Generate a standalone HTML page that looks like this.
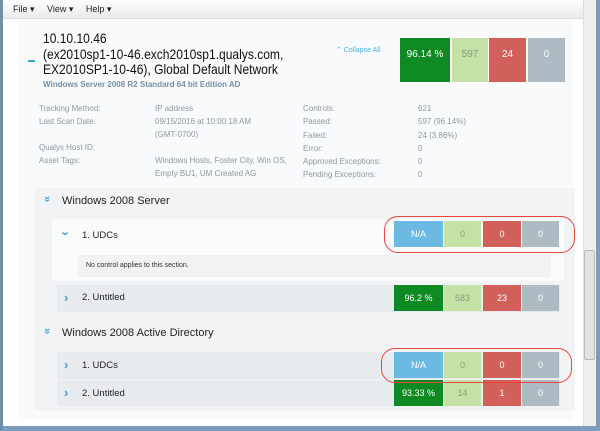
<!DOCTYPE html><html><head><style>
body{margin:0;width:600px;height:431px;overflow:hidden;background:#fff;font-family:"Liberation Sans",sans-serif;position:relative}
div{position:absolute;box-sizing:border-box}
.t{white-space:nowrap}
.lab{font-size:8px;color:#8e98a2}
.b{height:26px;text-align:center;color:#fff;font-size:9px;line-height:26px}
.g{background:#0f8a23}.lg{background:#c4e1a6;color:#8a9a7e}.r{background:#d2605a}.gr{background:#aebbc3}.bl{background:#6cb9e4}
.ell{border:1.3px solid #e8453c;border-radius:14px}
.ch{font-size:13px;font-weight:bold;color:#3aa0e0}
</style></head><body>
<div style="left:0;top:0;width:3px;height:431px;background:#6f8fb0"></div>
<div style="left:596px;top:0;width:4px;height:431px;background:#7d9bbd"></div>
<div style="left:3px;top:0;width:580px;height:19px;background:linear-gradient(#fdfdfd,#ebebeb);border-bottom:1px solid #dcdcdc"></div>
<div class="t" style="left:13px;top:4px;font-size:9px;color:#222">File ▾&nbsp;&nbsp;&nbsp;&nbsp;&nbsp;View ▾&nbsp;&nbsp;&nbsp;&nbsp;&nbsp;Help ▾</div>
<div style="left:583px;top:0;width:13px;height:431px;background:#eee;border-left:1px solid #ddd"></div>
<div style="left:584px;top:250px;width:11px;height:110px;background:#e2e2e2;border:1px solid #bbb;border-radius:2px"></div>
<div style="left:18px;top:20px;width:554px;height:400px;background:#f9fafb"></div>
<div style="left:28px;top:60px;width:7px;height:1.5px;background:#3aa0e0"></div>
<div class="t" style="left:43px;top:31px;font-size:14px;line-height:15.5px;color:#111;transform:scaleX(0.86);transform-origin:0 0">10.10.10.46<br>(ex2010sp1-10-46.exch2010sp1.qualys.com,<br>EX2010SP1-10-46), Global Default Network</div>
<div class="t" style="left:43px;top:80px;font-size:8px;font-weight:bold;color:#7590a8">Windows Server 2008 R2 Standard 64 bit Edition AD</div>
<div class="t" style="left:336px;top:46px;font-size:7px;color:#4ab0e8">⌃ Collapse All</div>
<div class="b g" style="left:400px;top:38px;width:50px;height:44px;line-height:34px;font-size:10px">96.14 %</div>
<div class="b lg" style="left:452px;top:38px;width:36px;height:44px;line-height:34px;font-size:10px">597</div>
<div class="b r" style="left:489px;top:38px;width:37px;height:44px;line-height:34px;font-size:10px">24</div>
<div class="b gr" style="left:528px;top:38px;width:37px;height:44px;line-height:34px;font-size:10px">0</div>
<div class="t lab" style="left:39px;top:102px;line-height:13px">Tracking Method:<br>Last Scan Date:<br><br>Qualys Host ID:<br>Asset Tags:</div>
<div class="t lab" style="left:155px;top:102px;line-height:13px">IP address<br>09/15/2016 at 10:00:18 AM<br><span style="line-height:10px">(GMT-0700)</span><br><br>Windows Hosts, Foster City, Win OS,<br>Empty BU1, UM Created AG</div>
<div class="t lab" style="left:303px;top:102px;line-height:13.3px">Controls:<br>Passed:<br>Failed:<br>Error:<br>Approved Exceptions:<br>Pending Exceptions:</div>
<div class="t lab" style="left:418px;top:102px;line-height:13.3px">621<br>597 (96.14%)<br>24 (3.86%)<br>0<br>0<br>0</div>
<div style="left:35px;top:188px;width:540px;height:222px;background:#f2f3f5"></div>
<div class="t" style="left:44px;top:193px;font-size:11px;font-weight:bold;color:#3aa0e0;transform:rotate(90deg)">»</div>
<div class="t" style="left:62px;top:195px;font-size:11px;color:#222">Windows 2008 Server</div>
<div style="left:52px;top:219px;width:512px;height:62px;background:#fafbfb"></div>
<div class="t ch" style="left:64px;top:226px;transform:rotate(90deg)">›</div>
<div class="t" style="left:82px;top:230px;font-size:9.5px;color:#222">1. UDCs</div>
<div style="left:78px;top:255px;width:473px;height:22px;background:#f1f2f3"></div>
<div class="t" style="left:86px;top:262px;font-size:7px;color:#333">No control applies to this section.</div>
<div style="left:57px;top:285px;width:503px;height:27px;background:#e8ebee"></div>
<div class="t ch" style="left:64px;top:290px">›</div>
<div class="t" style="left:82px;top:292px;font-size:9.5px;color:#222">2. Untitled</div>
<div class="t" style="left:44px;top:325px;font-size:11px;font-weight:bold;color:#3aa0e0;transform:rotate(90deg)">»</div>
<div class="t" style="left:62px;top:327px;font-size:11px;color:#222">Windows 2008 Active Directory</div>
<div style="left:57px;top:352px;width:503px;height:27px;background:#e8ebee"></div>
<div class="t ch" style="left:64px;top:357px">›</div>
<div class="t" style="left:82px;top:360px;font-size:9.5px;color:#222">1. UDCs</div>
<div style="left:57px;top:380px;width:503px;height:26px;background:#e8ebee"></div>
<div class="t ch" style="left:64px;top:385px">›</div>
<div class="t" style="left:82px;top:388px;font-size:9.5px;color:#222">2. Untitled</div>
<div class="b bl" style="left:394px;top:221px;width:49px">N/A</div><div class="b lg" style="left:444px;top:221px;width:37px">0</div><div class="b r" style="left:483px;top:221px;width:38px">0</div><div class="b gr" style="left:522px;top:221px;width:37px">0</div>
<div class="b g" style="left:394px;top:285px;width:49px">96.2 %</div><div class="b lg" style="left:444px;top:285px;width:37px">583</div><div class="b r" style="left:483px;top:285px;width:38px">23</div><div class="b gr" style="left:522px;top:285px;width:37px">0</div>
<div class="b bl" style="left:394px;top:352px;width:49px">N/A</div><div class="b lg" style="left:444px;top:352px;width:37px">0</div><div class="b r" style="left:483px;top:352px;width:38px">0</div><div class="b gr" style="left:522px;top:352px;width:37px">0</div>
<div class="b g" style="left:394px;top:380px;width:49px">93.33 %</div><div class="b lg" style="left:444px;top:380px;width:37px">14</div><div class="b r" style="left:483px;top:380px;width:38px">1</div><div class="b gr" style="left:522px;top:380px;width:37px">0</div>
<div class="ell" style="left:384px;top:216px;width:191px;height:37px"></div>
<div class="ell" style="left:381px;top:348px;width:191px;height:35px"></div>
<div style="left:3px;top:426px;width:593px;height:5px;background:#7d9bbd"></div>
</body></html>
